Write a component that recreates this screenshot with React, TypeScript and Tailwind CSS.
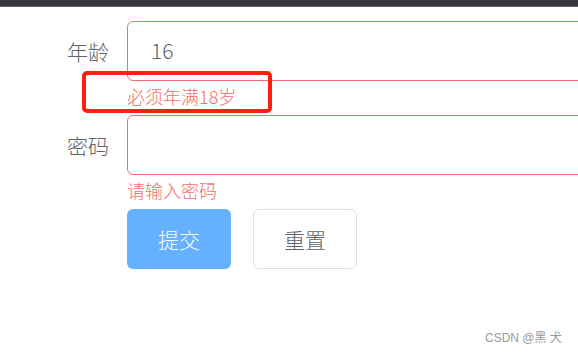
import React from "react";

export default function App() {
  const font = { fontFamily: '"Noto Sans CJK SC", "Noto Sans", sans-serif' };
  return (
    <div className="relative w-[578px] h-[354px] overflow-hidden bg-white font-light" style={font}>
      <div className="h-[6px] bg-[#35363a] border-b border-[#5f6368] box-content" />
      <div className="w-[760px] pt-[14px]">
        <div className="flex">
          <div className="w-[127px] pr-[18px] text-right text-[21px] leading-[60px] text-[#606266]">年龄</div>
          <div className="flex-1">
            <div className="h-[60px] border border-[#f56c6c] rounded-[6px] pl-[23px] flex items-center text-[21px] text-[#606266]">16</div>
            <div className="h-[34px] pt-[5px] text-[18px] leading-[20px] text-[#f56c6c]">必须年满18岁</div>
          </div>
        </div>
        <div className="flex">
          <div className="w-[127px] pr-[18px] text-right text-[21px] leading-[60px] text-[#606266]">密码</div>
          <div className="flex-1">
            <div className="h-[60px] border border-[#f56c6c] rounded-[6px]" />
            <div className="h-[34px] pt-[5px] text-[18px] leading-[20px] text-[#f56c6c]">请输入密码</div>
          </div>
        </div>
        <div className="flex pl-[127px]">
          <button className="w-[104px] h-[60px] rounded-[6px] bg-[#66b1ff] text-white text-[21px] leading-none font-light">提交</button>
          <button className="ml-[22px] w-[104px] h-[60px] rounded-[6px] border border-[#dcdfe6] bg-white text-[#606266] text-[21px] leading-none font-light">重置</button>
        </div>
      </div>
      <div className="absolute left-[82px] top-[71px] w-[190px] h-[42px] border-4 border-[#fe1e12] rounded-[5px]" />
      <div className="absolute left-[485px] top-[330px] text-[12px] leading-[16px] text-[#999999] font-normal" style={{ fontFamily: '"Liberation Sans", "Noto Sans CJK SC", sans-serif' }}>CSDN @黑 犬</div>
    </div>
  );
}
